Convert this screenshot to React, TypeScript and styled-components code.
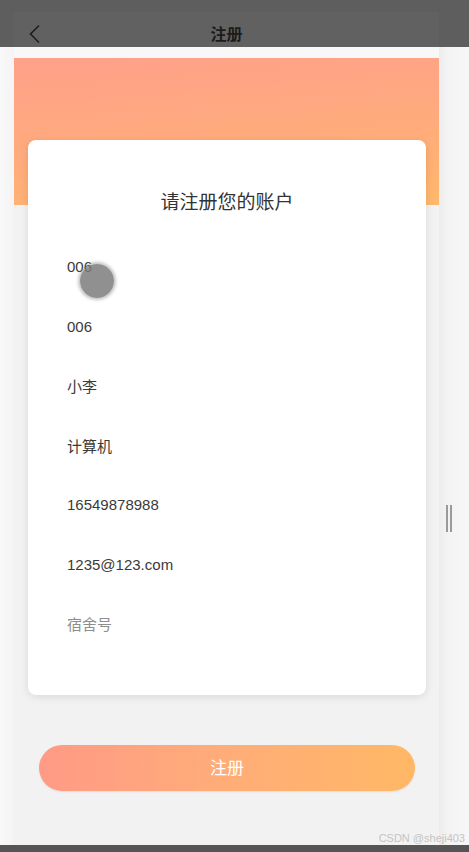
import React from "react";
import styled, { createGlobalStyle } from "styled-components";

const Global = createGlobalStyle`
  html, body { margin: 0; padding: 0; }
  body { font-family: "Liberation Sans", "Noto Sans CJK SC", sans-serif; background: #f7f7f8; }
`;

const Screen = styled.div`
  position: relative;
  width: 469px;
  height: 852px;
  overflow: hidden;
  display: flex;
  flex-direction: column;
  background: #f7f7f8;
`;

const TopBar = styled.div`
  height: 47px;
  flex: none;
  display: flex;
  background: #5e5e5e;
`;

const TopGutter = styled.div<{ $w: number }>`
  width: ${(p) => p.$w}px;
  flex: none;
`;

const NavArea = styled.div`
  width: 425px;
  flex: none;
  margin-top: 12px;
  background: #616161;
  position: relative;
  display: flex;
  align-items: center;
  justify-content: center;
  padding-top: 11px;
  box-sizing: border-box;
`;

const Back = styled.div`
  position: absolute;
  left: 14px;
  top: 12px;
  width: 14px;
  height: 20px;
  display: flex;
`;

const NavTitle = styled.div`
  font-size: 16px;
  font-weight: 700;
  color: #1b1b1b;
  line-height: 20px;
`;

const Body = styled.div`
  flex: 1;
  display: flex;
  min-height: 0;
`;

const LeftGutter = styled.div`
  width: 14px;
  flex: none;
  background: linear-gradient(to right, #f9f9f9, #f4f4f5);
`;

const RightGutter = styled.div`
  width: 30px;
  flex: none;
  position: relative;
  background: linear-gradient(to right, #ececed 0px, #f3f3f4 8px, #f7f7f8 30px);
`;

const Scrollbar = styled.div`
  position: absolute;
  left: 7px;
  top: 458px;
  width: 6px;
  height: 27px;
  display: flex;
  justify-content: space-between;
`;

const ScrollLine = styled.div`
  width: 2px;
  height: 100%;
  background: #9a9a9a;
`;

const Phone = styled.div`
  width: 425px;
  flex: none;
  background: #f2f2f3;
  display: flex;
  flex-direction: column;
`;

const Strip = styled.div`
  height: 11px;
  background: #f8f8f8;
  flex: none;
`;

const Banner = styled.div`
  height: 147px;
  flex: none;
  background: linear-gradient(175deg, #ffa08a 0%, #ffab7c 55%, #ffb86c 100%);
`;

const Card = styled.div`
  margin: -65px 13px 0 14px;
  height: 555px;
  box-sizing: border-box;
  background: #ffffff;
  border-radius: 8px;
  box-shadow: 0 2px 8px rgba(0, 0, 0, 0.1);
  padding: 50px 0 0 39px;
  position: relative;
`;

const CardTitle = styled.div`
  font-size: 19px;
  color: #333333;
  text-align: center;
  line-height: 26px;
  margin-left: -39px;
  margin-bottom: 21px;
`;

const Field = styled.div<{ $placeholder?: boolean }>`
  height: 59.5px;
  display: flex;
  align-items: center;
  font-size: 15px;
  color: ${(p) => (p.$placeholder ? "#8e8e8e" : "#3a3a3a")};
`;

const Touch = styled.div`
  position: absolute;
  left: 52px;
  top: 124px;
  width: 34px;
  height: 34px;
  border-radius: 50%;
  background: rgba(125, 125, 125, 0.85);
  box-shadow: 0 0 3px 2px rgba(139, 139, 139, 0.5);
`;

const ButtonWrap = styled.div`
  padding: 50px 24px 0 25px;
`;

const SubmitButton = styled.button`
  width: 100%;
  height: 46px;
  border: none;
  border-radius: 23px;
  padding: 0 0 3px;
  background: linear-gradient(to right, #ff9a86, #ffad78 50%, #ffb866);
  color: #ffffff;
  font-size: 17px;
  font-family: "Liberation Sans", "Noto Sans CJK SC", sans-serif;
  box-shadow: 0 1px 2px rgba(0, 0, 0, 0.08);
`;

const BottomBar = styled.div`
  height: 7px;
  flex: none;
  background: #555555;
`;

const Watermark = styled.div`
  position: absolute;
  right: 4px;
  bottom: 7px;
  font-size: 11px;
  color: #c4c4c4;
  line-height: 14px;
`;

const fields: { text: string; placeholder?: boolean }[] = [
  { text: "006" },
  { text: "006" },
  { text: "小李" },
  { text: "计算机" },
  { text: "16549878988" },
  { text: "1235@123.com" },
  { text: "宿舍号", placeholder: true },
];

export default function App() {
  return (
    <>
      <Global />
      <Screen>
        <TopBar>
          <TopGutter $w={14} />
          <NavArea>
            <Back>
              <svg width="14" height="20" viewBox="0 0 14 20">
                <path d="M11 1.5 L2.5 10 L11 18.5" fill="none" stroke="#1e1e1e" strokeWidth="1.6" />
              </svg>
            </Back>
            <NavTitle>注册</NavTitle>
          </NavArea>
          <TopGutter $w={30} />
        </TopBar>
        <Body>
          <LeftGutter />
          <Phone>
            <Strip />
            <Banner />
            <Card>
              <CardTitle>请注册您的账户</CardTitle>
              {fields.map((f, i) => (
                <Field key={i} $placeholder={f.placeholder}>
                  {f.text}
                </Field>
              ))}
              <Touch />
            </Card>
            <ButtonWrap>
              <SubmitButton>注册</SubmitButton>
            </ButtonWrap>
          </Phone>
          <RightGutter>
            <Scrollbar>
              <ScrollLine />
              <ScrollLine />
            </Scrollbar>
          </RightGutter>
        </Body>
        <BottomBar />
        <Watermark>CSDN @sheji403</Watermark>
      </Screen>
    </>
  );
}
